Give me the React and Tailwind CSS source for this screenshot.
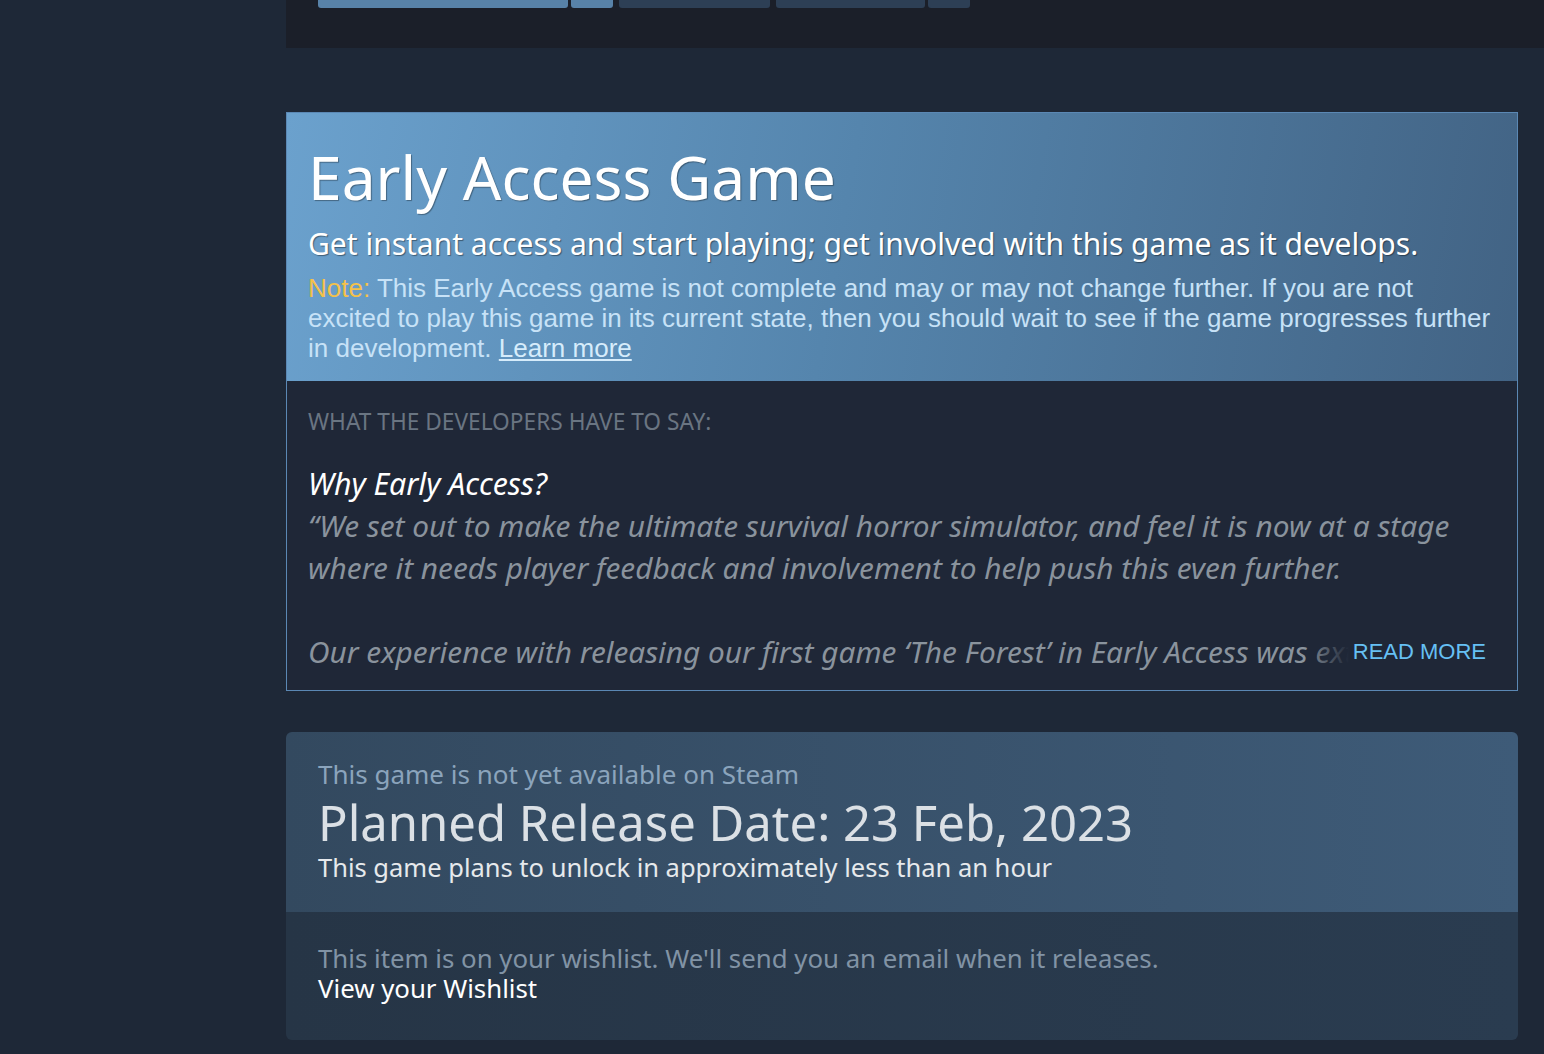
const tabs = [
  { w: "w-[250px]", active: true },
  { w: "w-[42px]", active: true },
  { w: "w-[151px]", active: false },
  { w: "w-[149px]", active: false },
  { w: "w-[42px]", active: false },
];

export default function App() {
  return (
    <div className="min-h-screen bg-[#1e2837] pl-[286px] font-['Noto_Sans',sans-serif]">
      {/* ── TOP STRIP ── */}
      <div className="h-[48px] bg-[#1b1f29] pl-[32px] flex items-start">
        {tabs.map((t, i) => (
          <div
            key={i}
            className={`h-[8px] rounded-b-[3px] ${t.w} ${
              t.active ? "bg-[#5882a8]" : "bg-[#2d3f55]"
            } ${i === 1 || i === 4 ? "ml-[3px]" : i === 0 ? "" : "ml-[6px]"}`}
          />
        ))}
      </div>

      <div className="mr-[26px] mt-[64px]">
        {/* ── EARLY ACCESS ── */}
        <div className="border border-[#5b88b4]">
          <div className="bg-[linear-gradient(100deg,#6ba1cd_0%,#5585ad_45%,#426384_100%)] px-[21px] pt-[34px] pb-[18px]">
            <h1 className="text-[60.5px] leading-[60px] text-white [text-shadow:1px_1px_1px_rgba(0,0,0,0.35)]">
              Early Access Game
            </h1>
            <p className="mt-[20px] text-[30px] leading-[34px] text-white whitespace-nowrap [text-shadow:1px_1px_1px_rgba(0,0,0,0.4)]">
              Get instant access and start playing; get involved with this game as it develops.
            </p>
            <p className="mt-[12px] font-['Liberation_Sans',Arial,sans-serif] text-[26px] leading-[30px] text-[#c7e2f7] whitespace-nowrap">
              <span className="text-[#f4c14a]">Note:</span> This Early Access game is not complete and may or may not change further. If you are not
              <br />
              excited to play this game in its current state, then you should wait to see if the game progresses further
              <br />
              in development.{" "}
              <a className="underline text-[#d6ecfb]">Learn more</a>
            </p>
          </div>

          <div className="relative h-[309px] overflow-hidden bg-[#1f2737] px-[21px] pt-[26px]">
            <p className="text-[22.7px] leading-[30px] uppercase text-[#6a7582]">
              What the developers have to say:
            </p>
            <h3 className="mt-[26px] text-[30.3px] leading-[42px] italic text-white">
              Why Early Access?
            </h3>
            <p className="text-[29.8px] leading-[42px] italic text-[#8a939d]">
              “We set out to make the ultimate survival horror simulator, and feel it is now at a stage where it needs player feedback and involvement to help push this even further.
            </p>
            <p className="mt-[42px] text-[29.8px] leading-[42px] italic text-[#8a939d] whitespace-nowrap">
              Our experience with releasing our first game ‘The Forest’ in Early Access was extremely positive and helped shape it into a much better game.
            </p>

            <div className="absolute right-0 bottom-[17px] h-[42px] flex items-center pl-[48px] pr-[31px] bg-[linear-gradient(to_right,rgba(31,39,55,0),#1f2737_44px)]">
              <a className="font-['Liberation_Sans',Arial,sans-serif] text-[22px] leading-[30px] text-[#66c0f4]">
                READ MORE
              </a>
            </div>
          </div>
        </div>

        {/* ── RELEASE DATE ── */}
        <div className="mt-[41px] rounded-[6px] overflow-hidden">
          <div className="bg-[linear-gradient(to_right,#33495f,#3e5b78)] px-[32px] pt-[25px] pb-[28px]">
            <p className="text-[26px] leading-[34px] text-[#8ba4bc]">
              This game is not yet available on Steam
            </p>
            <h2 className="mt-[3px] text-[49px] leading-[56px] text-[#dbe0e5]">
              Planned Release Date: 23 Feb, 2023
            </h2>
            <p className="text-[25.5px] leading-[34px] text-[#e6e9ec]">
              This game plans to unlock in approximately less than an hour
            </p>
          </div>
          <div className="bg-[linear-gradient(to_right,#263546,#2a3c50)] px-[32px] pt-[31px] pb-[37px]">
            <p className="text-[25.8px] leading-[30px] text-[#8193a5]">
              This item is on your wishlist. We'll send you an email when it releases.
            </p>
            <a className="block text-[25.8px] leading-[30px] text-white">
              View your Wishlist
            </a>
          </div>
        </div>
      </div>
    </div>
  );
}
